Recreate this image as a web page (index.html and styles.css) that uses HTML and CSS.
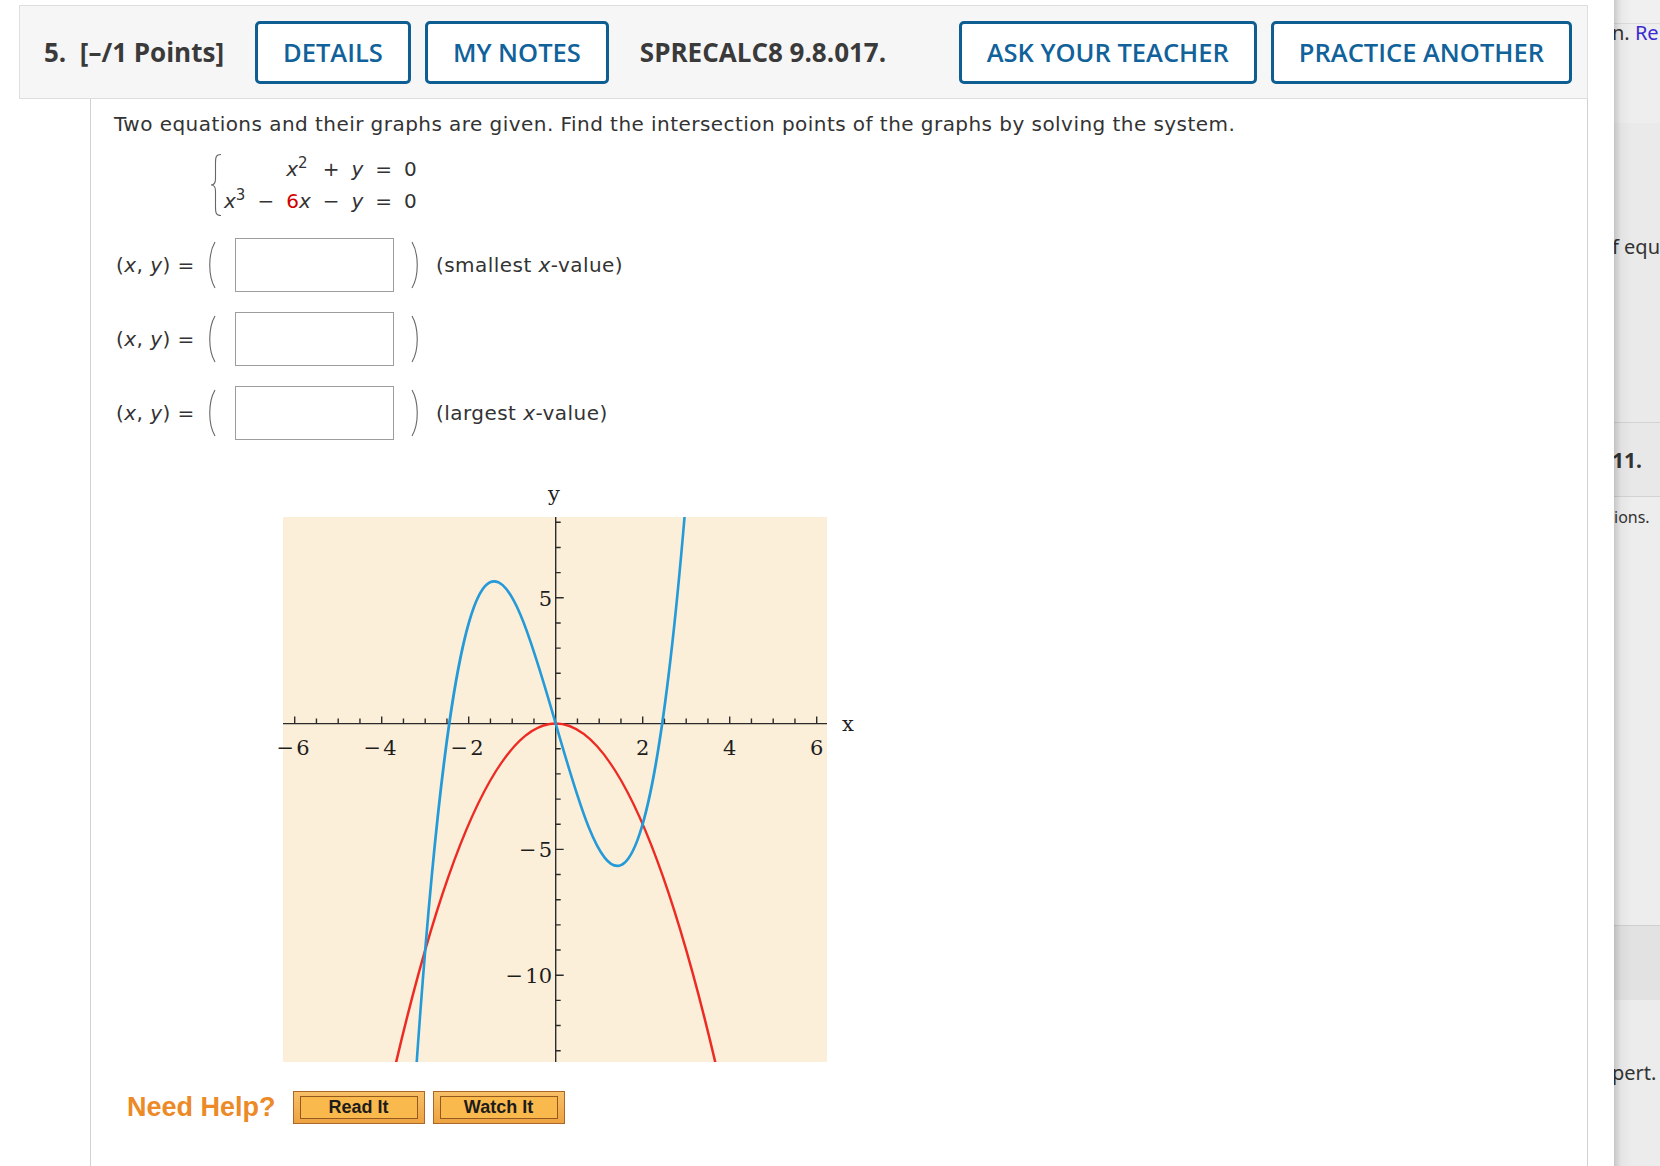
FILE: index.html
```html
<!DOCTYPE html>
<html lang="en">
<head>
<meta charset="utf-8">
<title>SPRECALC8 9.8.017</title>
<link rel="stylesheet" href="styles.css">
</head>
<body>
<div class="page">
  <div class="question">
    <div class="qhead">
      <span class="qnum">5.&nbsp; [–/1 Points]</span>
      <button class="hbtn">DETAILS</button>
      <button class="hbtn">MY NOTES</button>
      <span class="qtitle">SPRECALC8 9.8.017.</span>
      <div class="hright">
        <button class="hbtn">ASK YOUR TEACHER</button>
        <button class="hbtn">PRACTICE ANOTHER</button>
      </div>
    </div>
    <div class="qbody">
      <p class="prompt">Two equations and their graphs are given. Find the intersection points of the graphs by solving the system.</p>
      <div class="system">
        <svg class="brace" viewBox="0 0 12 64"><path d="M11 1.5C6 1.5 5.5 4 5.5 10V26C5.5 30 4.5 32 1 32C4.5 32 5.5 34 5.5 38V54C5.5 60 6 62.5 11 62.5"/></svg>
        <div class="eqgrid">
          <span></span><span></span><span class="lft"><i>x</i><sup>2</sup></span><span>+</span><span><i>y</i></span><span>=</span><span>0</span>
          <span><i>x</i><sup>3</sup></span><span>−</span><span class="lft"><span class="red">6</span><i>x</i></span><span>−</span><span><i>y</i></span><span>=</span><span>0</span>
        </div>
      </div>
      <div class="answers">
        <div class="arow">
          <span class="alabel">(<i>x</i>, <i>y</i>) =</span>
          <svg class="paren l" viewBox="0 0 11 50"><path d="M9 2C2 14 2 36 9 48"/></svg>
          <input class="box" type="text">
          <svg class="paren r" viewBox="0 0 11 50"><path d="M2 2C9 14 9 36 2 48"/></svg>
          <span class="anote">(smallest <i>x</i>-value)</span>
        </div>
        <div class="arow">
          <span class="alabel">(<i>x</i>, <i>y</i>) =</span>
          <svg class="paren l" viewBox="0 0 11 50"><path d="M9 2C2 14 2 36 9 48"/></svg>
          <input class="box" type="text">
          <svg class="paren r" viewBox="0 0 11 50"><path d="M2 2C9 14 9 36 2 48"/></svg>
        </div>
        <div class="arow">
          <span class="alabel">(<i>x</i>, <i>y</i>) =</span>
          <svg class="paren l" viewBox="0 0 11 50"><path d="M9 2C2 14 2 36 9 48"/></svg>
          <input class="box" type="text">
          <svg class="paren r" viewBox="0 0 11 50"><path d="M2 2C9 14 9 36 2 48"/></svg>
          <span class="anote">(largest <i>x</i>-value)</span>
        </div>
      </div>
      <svg class="graph" viewBox="0 0 600 600">
        <defs><clipPath id="plotclip"><rect x="23" y="47" width="544" height="545"/></clipPath></defs>
        <rect class="plotbg" x="23" y="47" width="544" height="545"/>
        <g class="axes">
          <path d="M23 253.6H567M295.7 47V592"/>
          <path d="M34.7 246.6V253.6M56.45 248.6V253.6M78.2 248.6V253.6M99.95 248.6V253.6M121.7 246.6V253.6M143.45 248.6V253.6M165.2 248.6V253.6M186.95 248.6V253.6M208.7 246.6V253.6M230.45 248.6V253.6M252.2 248.6V253.6M273.95 248.6V253.6M317.45 248.6V253.6M339.2 248.6V253.6M360.95 248.6V253.6M382.7 246.6V253.6M404.45 248.6V253.6M426.2 248.6V253.6M447.95 248.6V253.6M469.7 246.6V253.6M491.45 248.6V253.6M513.2 248.6V253.6M534.95 248.6V253.6M556.7 246.6V253.6"/>
          <path d="M295.7 52.32H300.7M295.7 77.48H300.7M295.7 102.64H300.7M295.7 127.8H303.7M295.7 152.96H300.7M295.7 178.12H300.7M295.7 203.28H300.7M295.7 228.44H300.7M295.7 278.76H300.7M295.7 303.92H300.7M295.7 329.08H300.7M295.7 354.24H300.7M295.7 379.4H303.7M295.7 404.56H300.7M295.7 429.72H300.7M295.7 454.88H300.7M295.7 480.04H300.7M295.7 505.2H303.7M295.7 530.36H300.7M295.7 555.52H300.7M295.7 580.68H300.7"/>
        </g>
        <g clip-path="url(#plotclip)">
          <path class="red-curve" d="M134.75 598.0Q295.7 -90.8 456.65 598.0"/>
          <path class="blue-curve" d="M154.33 626.67C244.95 -719.8 335.58 1127.9 426.2 27.16"/>
        </g>
        <g class="lbl">
          <text x="33" y="285" text-anchor="middle">−&#8202;6</text>
          <text x="120" y="285" text-anchor="middle">−&#8202;4</text>
          <text x="207" y="285" text-anchor="middle">−&#8202;2</text>
          <text x="382.7" y="285" text-anchor="middle">2</text>
          <text x="469.7" y="285" text-anchor="middle">4</text>
          <text x="556.7" y="285" text-anchor="middle">6</text>
          <text x="292" y="135.6" text-anchor="end">5</text>
          <text x="292" y="387.2" text-anchor="end">−&#8202;5</text>
          <text x="292" y="513" text-anchor="end">−&#8202;10</text>
          <text x="294" y="31" text-anchor="middle">y</text>
          <text x="588" y="261" text-anchor="middle">x</text>
        </g>
      </svg>
      <div class="help">
        <span class="needhelp">Need Help?</span>
        <button class="hlp"><span>Read It</span></button>
        <button class="hlp"><span>Watch It</span></button>
      </div>
    </div>
  </div>
  <aside class="side">
    <div class="s s1"></div>
    <div class="s s2"><span class="t t1">n. <span class="link">Re</span></span></div>
    <div class="s s3"><span class="t t3">f equ</span></div>
    <div class="s s4"><span class="t t4">11.</span></div>
    <div class="s s5"><span class="t t5">ions.</span></div>
    <div class="s s6"></div>
    <div class="s s7"><span class="t t7">pert.</span></div>
  </aside>
</div>
</body>
</html>
```
FILE: styles.css
```css
html, body {
  margin: 0;
  padding: 0;
  background: #ffffff;
}
body {
  font-family: "DejaVu Sans", Verdana, sans-serif;
  color: #333333;
}
.page {
  display: flex;
  height: 1166px;
  overflow: hidden;
}
.question {
  flex: 0 0 1614px;
  box-sizing: border-box;
  padding: 5px 0 0 19px;
  display: flex;
  flex-direction: column;
}
.qhead {
  width: 1569px;
  height: 94px;
  box-sizing: border-box;
  border: 1px solid #dedede;
  background: #f6f6f6;
  display: flex;
  align-items: center;
  padding: 0 15px 0 24px;
  font-family: "Open Sans", sans-serif;
}
.qnum, .qtitle {
  font-weight: 700;
  font-size: 26px;
  color: #3a3a3a;
  white-space: pre;
}
.qnum { margin-right: 31px; }
.qtitle { margin-left: 31px; }
.hbtn {
  height: 63px;
  box-sizing: border-box;
  border: 3px solid #0f5e91;
  border-radius: 5px;
  background: #ffffff;
  color: #11629a;
  font-family: "Open Sans", sans-serif;
  font-weight: 600;
  font-size: 25.5px;
  padding: 0 25px;
  margin: 0;
  white-space: nowrap;
}
.hbtn + .hbtn { margin-left: 14px; }
.hright {
  margin-left: auto;
  display: flex;
}
.qbody {
  flex: 1;
  margin-left: 71px;
  width: 1498px;
  box-sizing: border-box;
  border-left: 1px solid #d2d2d2;
  border-right: 1px solid #d2d2d2;
  padding: 13px 0 0 23px;
}
.prompt {
  margin: 0;
  font-size: 20px;
  letter-spacing: 0.45px;
  line-height: 24px;
}
.system {
  display: flex;
  align-items: center;
  margin: 17px 0 0 96px;
  height: 64px;
}
.brace {
  width: 12px;
  height: 64px;
  flex: none;
}
.brace path, .paren path {
  fill: none;
  stroke: #666666;
  stroke-width: 1.1;
}
.eqgrid {
  display: grid;
  grid-template-columns: repeat(7, auto);
  column-gap: 12px;
  line-height: 32px;
  font-size: 20px;
  justify-items: center;
  margin-left: 2px;
}
.eqgrid .lft { justify-self: start; }
.eqgrid sup {
  font-size: 0.75em;
  line-height: 0;
}
.red { color: #d40000; }
.answers {
  margin-top: 21px;
  display: flex;
  flex-direction: column;
  gap: 20px;
}
.arow {
  display: flex;
  align-items: center;
  height: 54px;
}
.alabel {
  width: 90px;
  margin-left: 2px;
  font-size: 20px;
  letter-spacing: 0.45px;
  white-space: nowrap;
}
.paren {
  width: 11px;
  height: 50px;
  flex: none;
}
.paren.l { margin-right: 18px; }
.paren.r { margin-right: 15px; }
.box {
  width: 159px;
  height: 54px;
  box-sizing: border-box;
  border: 1px solid #9d9d9d;
  margin: 0 16px 0 0;
  padding: 0;
  background: #ffffff;
}
.anote {
  font-size: 20px;
  letter-spacing: 0.45px;
  white-space: nowrap;
}
.graph {
  display: block;
  width: 600px;
  height: 600px;
  margin: 30px 0 0 146px;
}
.plotbg { fill: #fcefd9; }
.axes path {
  fill: none;
  stroke: #2b2b2b;
  stroke-width: 1.4;
}
.red-curve {
  fill: none;
  stroke: #ec2b24;
  stroke-width: 2.5;
}
.blue-curve {
  fill: none;
  stroke: #249ad8;
  stroke-width: 2.6;
}
.lbl text {
  font-family: "DejaVu Serif", "Liberation Serif", serif;
  font-size: 21px;
  fill: #1e1e1e;
}
.help {
  display: flex;
  align-items: center;
  margin: 21px 0 0 13px;
  height: 33px;
}
.needhelp {
  font-family: "Liberation Sans", Arial, sans-serif;
  font-weight: 700;
  font-size: 27px;
  color: #ec8a27;
  margin-right: 17px;
  white-space: nowrap;
}
.hlp {
  width: 132px;
  height: 33px;
  box-sizing: border-box;
  border: 1px solid #a9682a;
  background: linear-gradient(#f8c067, #eea241);
  padding: 4px 6px;
  margin: 0;
  display: flex;
}
.hlp + .hlp { margin-left: 8px; }
.hlp span {
  flex: 1;
  display: flex;
  align-items: center;
  justify-content: center;
  border: 1px solid #93591e;
  background: #fab94c;
  font-family: "Liberation Sans", Arial, sans-serif;
  font-weight: 700;
  font-size: 18px;
  color: #1c1c1c;
}
.side {
  flex: 1;
  position: relative;
  display: flex;
  flex-direction: column;
  background: #ececec;
  font-family: "Noto Sans", sans-serif;
  color: #333333;
  overflow: hidden;
}
.side::after {
  content: "";
  position: absolute;
  top: 0;
  bottom: 0;
  left: 0;
  width: 18px;
  background: linear-gradient(to right, rgba(0,0,0,0.16), rgba(0,0,0,0.03) 40%, rgba(0,0,0,0));
}
.s {
  box-sizing: border-box;
  white-space: nowrap;
}
.s1 { height: 24px; background: #f0f0f0; border-bottom: 1px solid #dcdcdc; }
.s2 { height: 99px; background: #eeeeee; }
.s3 { height: 300px; background: #eaeaea; border-bottom: 1px solid #d3d3d3; }
.s4 { height: 74px; background: #e8e8e8; border-bottom: 1px solid #d3d3d3; }
.s5 { height: 429px; background: #ededed; border-bottom: 1px solid #d0d0d0; }
.s6 { height: 74px; background: #e2e2e2; }
.s7 { flex: 1; background: #ececec; }
.t {
  display: block;
  margin-left: -2px;
  font-size: 20px;
  line-height: 24px;
}
.t1 { margin-top: -3px; }
.t3 { margin-top: 112px; }
.t4 { margin-top: 25px; font-weight: 700; font-size: 21px; }
.t5 { margin-top: 8px; margin-left: 0; font-size: 16px; }
.t7 { margin-top: 61px; }
.link { color: #3a2bd0; }
```
